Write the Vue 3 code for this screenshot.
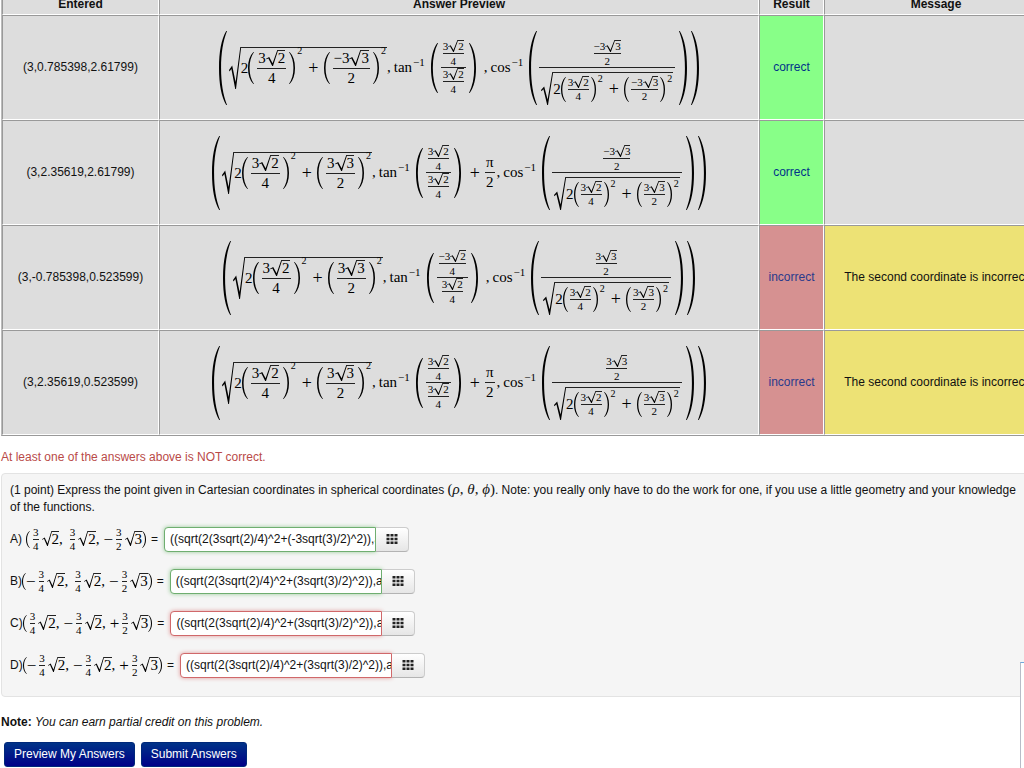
<script setup>
import { h } from 'vue'

// Small builders for typeset formulas
const box = (cls, ...kids) => h('span', { class: cls }, kids)
const num = (t) => box('num', t)
const fn = (t) => box('fn', t)
const op = (t) => box('op', t)
const neg = () => box('neg', '−')
const comma = () => box('comma', ',')
const paren = (side, size) =>
  h('svg', { class: ['paren', side, size], viewBox: '0 0 10 100', preserveAspectRatio: 'none', 'aria-hidden': 'true' }, [
    h('path', {
      d: side === 'left'
        ? 'M9 0C3 11 0 28 0 50S3 89 9 100H10C5 86 2.6 70 2.6 50S5 14 10 0Z'
        : 'M1 0C7 11 10 28 10 50S7 89 1 100H0C5 86 7.4 70 7.4 50S5 14 0 0Z'
    })
  ])
const group = (size, ...kids) => box('group g-' + size, paren('left', size), ...kids, paren('right', size))
const frac = (cls, top, bottom) => box('frac ' + cls, box('top', ...top), box('bar'), box('bottom', ...bottom))
const root = (cls, ...kids) =>
  box('root ' + cls,
    h('svg', { class: 'surd', viewBox: '0 0 12 42', preserveAspectRatio: 'none', 'aria-hidden': 'true' }, [
      h('path', { d: 'M0 23L3.2 18.5L6.6 35L11.3 0H12V1.5L7 42H6.2L2.4 22L.5 24.5Z' })
    ]),
    box('radicand', ...kids))
const sup = (...kids) => box('sup', ...kids)
const inv = () => box('inv', neg(), num('1'))
const radThree = (minus, n) => [...(minus ? [neg()] : []), num('3'), root('tiny', num(n))]

const norm = (size, minus) => [
  num('2'),
  box('power', group(size, frac(size, radThree(false, '2'), [num('4')])), sup(num('2'))),
  op('+'),
  box('power', group(size, frac(size, radThree(minus, '3'), [num('2')])), sup(num('2')))
]

const formula = ({ minusRho, minusTan, pi, minusCos, minusDen }) => () =>
  box('math',
    group('huge',
      root('large', ...norm('normal', minusRho)),
      comma(), fn('tan'), inv(),
      group('big',
        frac('outer',
          [frac('small', radThree(minusTan, '2'), [num('4')])],
          [frac('small', radThree(false, '2'), [num('4')])])),
      ...(pi ? [op('+'), frac('normal', [num('π')], [num('2')])] : [box('gap')]),
      comma(), fn('cos'), inv(),
      group('huge',
        frac('outer tall',
          [frac('small', radThree(minusCos, '3'), [num('2')])],
          [root('medium', ...norm('small', minusDen))]))))

const term = (sign, d, n) => [
  ...(sign ? [box('neg', sign)] : []),
  frac('small', [num('3')], [num(d)]),
  root('inline', num(n))
]
const point = (a, b, c) => () =>
  box('math inline-math', paren('left', 'line'),
    ...term(a, '4', '2'), comma(), ...term(b, '4', '2'), comma(), ...term(c, '2', '3'),
    paren('right', 'line'))

const results = [
  { entered: '(3,0.785398,2.61799)', preview: formula({ minusRho: true, minusCos: true, minusDen: true }), result: 'correct', message: '' },
  { entered: '(3,2.35619,2.61799)', preview: formula({ pi: true, minusCos: true }), result: 'correct', message: '' },
  { entered: '(3,-0.785398,0.523599)', preview: formula({ minusTan: true }), result: 'incorrect', message: 'The second coordinate is incorrect' },
  { entered: '(3,2.35619,0.523599)', preview: formula({ pi: true }), result: 'incorrect', message: 'The second coordinate is incorrect' }
]

const answers = [
  { id: 'a', label: 'A)', spaced: true, point: point('', '', '−'), ok: true, value: '((sqrt(2(3sqrt(2)/4)^2+(-3sqrt(3)/2)^2)),a' },
  { id: 'b', label: 'B)', point: point('−', '', '−'), ok: true, value: '((sqrt(2(3sqrt(2)/4)^2+(3sqrt(3)/2)^2)),a' },
  { id: 'c', label: 'C)', point: point('', '−', '+'), ok: false, value: '((sqrt(2(3sqrt(2)/4)^2+(3sqrt(3)/2)^2)),a' },
  { id: 'd', label: 'D)', point: point('−', '−', '+'), ok: false, value: '((sqrt(2(3sqrt(2)/4)^2+(3sqrt(3)/2)^2)),a' }
]
</script>

<template>
  <main class="page">
    <table class="results">
      <colgroup>
        <col class="c-entered"><col class="c-preview"><col class="c-result"><col class="c-message">
      </colgroup>
      <thead>
        <tr><th>Entered</th><th>Answer Preview</th><th>Result</th><th>Message</th></tr>
      </thead>
      <tbody>
        <tr v-for="r in results" :key="r.entered">
          <td>{{ r.entered }}</td>
          <td><component :is="r.preview" /></td>
          <td :class="r.result"><a href="#">{{ r.result }}</a></td>
          <td :class="{ note: r.message }">{{ r.message }}</td>
        </tr>
      </tbody>
    </table>

    <p class="warning">At least one of the answers above is NOT correct.</p>

    <section class="problem">
      <p class="intro">
        (1 point) Express the point given in Cartesian coordinates in spherical coordinates
        <span class="coords">(<i>ρ</i>, <i>θ</i>, <i>ϕ</i>)</span>. Note: you really only have to do the work for one, if you use a little geometry and your knowledge of the functions.
      </p>
      <div v-for="a in answers" :key="a.id" class="answer">
        <label :for="'ans-' + a.id" :class="{ spaced: a.spaced }">{{ a.label }}<component :is="a.point" /><span class="equals">=</span></label>
        <input :id="'ans-' + a.id" type="text" :value="a.value" :class="a.ok ? 'ok' : 'bad'">
        <button type="button" class="grid-button" aria-label="Equation editor">
          <svg viewBox="0 0 11 10" width="12" height="10" aria-hidden="true">
            <path d="M0 0h3v2.6H0zM4 0h3v2.6H4zM8 0h3v2.6H8zM0 3.7h3v2.6H0zM4 3.7h3v2.6H4zM8 3.7h3v2.6H8zM0 7.4h3V10H0zM4 7.4h3V10H4zM8 7.4h3V10H8z" />
          </svg>
        </button>
      </div>
    </section>

    <p class="credit"><b>Note:</b> <i>You can earn partial credit on this problem.</i></p>
    <div class="actions">
      <button type="button">Preview My Answers</button>
      <button type="button">Submit Answers</button>
    </div>
    <aside class="panel"></aside>
  </main>
</template>

<style>
body { background: #fff; overflow: hidden; }
</style>

<style scoped>
.page {
  position: relative;
  box-sizing: border-box;
  height: 100vh;
  overflow: hidden;
  display: flow-root;
  font: 12px/17px "Liberation Sans", Arial, sans-serif;
  color: #111;
}
p { margin: 0; }

.results {
  width: max-content;
  margin: -6px 0 0 1px;
  border: 1px solid #bbb;
  border-top: 0;
  border-bottom-color: #999;
  border-spacing: 0;
  background: #ddd;
  text-align: center;
}
.c-entered { width: 157px; }
.c-preview { width: 600px; }
.c-result { width: 65px; }
.c-message { width: 224px; }
th, td {
  box-sizing: border-box;
  padding: 0;
  border: 1px solid;
  border-color: #999 #fff #fff #999;
  white-space: nowrap;
}
th { height: 21px; line-height: 17px; }
td { height: 105px; }
td a { color: #038; text-decoration: none; }
.correct { background: #8f8; }
.incorrect { background: #d69191; }
.incorrect a { color: #2a3a8c; }
.note { background: #ede275; }

.warning { margin: 13px 0 0 1px; color: #b94a48; }
.problem {
  margin: 7px -24px 0 1px;
  padding: 7px 24px 10px 8px;
  border: 1px solid #e3e3e3;
  border-radius: 4px;
  background: #f5f5f5;
}
.intro { margin-bottom: 2px; }
.coords { font: 15px/16px "Liberation Serif", serif; }
.answer { display: flex; align-items: center; height: 42px; }
.answer label { display: flex; align-items: center; }
.spaced :deep(.inline-math) { margin-left: 4px; }
.equals { margin: 0 6px 0 5px; }
.answer input {
  box-sizing: border-box;
  width: 212px;
  height: 25px;
  padding: 0 0 0 5px;
  border: 1px solid;
  border-radius: 4px 0 0 4px;
  background: #fff;
  color: #111;
  font: inherit;
  outline: 0;
}
.answer .ok { border-color: #6fae70; box-shadow: 0 0 4px #9c9; }
.answer .bad { border-color: #d0686a; box-shadow: 0 0 4px #e09a9a; }
.grid-button {
  display: flex;
  align-items: center;
  justify-content: center;
  width: 33px;
  height: 25px;
  padding: 0;
  border: 1px solid #ccc;
  border-left: 0;
  border-bottom-color: #b3b3b3;
  border-radius: 0 4px 4px 0;
  background: linear-gradient(#fff, #e6e6e6);
}
.grid-button svg { fill: #222; }

.credit { margin: 17px 0 0 1px; }
.actions { display: flex; gap: 6px; margin: 11px 0 0 4px; }
.actions button {
  height: 25px;
  padding: 0 9px;
  border: 1px solid #00287a;
  border-radius: 3px;
  background: linear-gradient(#038, #008);
  color: #fff;
  font: inherit;
}
.panel {
  position: absolute;
  top: 662px;
  right: 0;
  bottom: 0;
  width: 3px;
  border-top: 1px solid #6fa8dc;
  border-left: 1px solid #b8bcc8;
  background: #fff;
}

:deep(.math) {
  display: inline-flex;
  align-items: center;
  font: 15px/1 "Liberation Serif", serif;
  color: #000;
  vertical-align: middle;
}
:deep(.math span) { display: inline-flex; align-items: center; flex: none; }
:deep(.math .op) { font-size: 18px; margin: 0 5px; }
:deep(.math .group + .op) { margin-left: 9px; }
:deep(.math .comma) { margin-right: 3px; }
:deep(.math .frac + .comma) { margin-left: 2px; }
:deep(.math .gap) { width: 8px; }
:deep(.math .inv) { font-size: 11px; padding-bottom: 10px; margin: 0 6px 0 1px; }
:deep(.math .paren) { flex: none; display: block; }
:deep(.math .paren.huge) { width: 8px; height: 74px; }
:deep(.math .paren.big) { width: 7px; height: 50px; }
:deep(.math .paren.normal) { width: 6px; height: 32px; }
:deep(.math .paren.small) { width: 5px; height: 25px; }
:deep(.math .paren.line) { width: 4px; height: 17px; }
:deep(.math .g-huge > .left) { margin-right: 2px; }
:deep(.math .g-huge > .right) { margin-left: 4px; }
:deep(.math .g-big) { gap: 3px; }
:deep(.math .g-normal) { gap: 3px; }
:deep(.math .g-small) { gap: 2px; }
:deep(.math .power) { align-items: flex-start; }
:deep(.math .sup) { font-size: 10px; margin: -4px 1px 0 2px; }
:deep(.math .g-small + .sup) { margin-top: -2px; }

:deep(.math .frac) { display: inline-grid; grid-template-rows: 1fr 1px 1fr; }
:deep(.math .bar) { height: 1px; background: #222; }
:deep(.math .top) { align-items: flex-end; justify-content: center; padding: 0 1px 2px; }
:deep(.math .bottom) { align-items: flex-start; justify-content: center; padding: 2px 1px 0; }
:deep(.math .frac.small) { font-size: 11px; }
:deep(.math .frac.small > .top) { padding: 0 0 1px; }
:deep(.math .frac.small > .bottom) { padding: 1px 0 0; }
:deep(.math .outer > .top), :deep(.math .outer > .bottom) { padding: 0 2px; }
:deep(.math .tall > .top) { height: 37px; }
:deep(.math .tall > .top > .frac) { align-self: flex-end; }

:deep(.math .root) { align-items: stretch; }
:deep(.math .surd) { flex: none; display: block; width: 12px; }
:deep(.math .radicand) { border-top: 1px solid #222; }
:deep(.math .large) { height: 42px; }
:deep(.math .medium) { height: 33px; margin-top: 4px; }
:deep(.math .tiny .surd) { width: 10px; height: 12px; }
:deep(.math .normal .tiny .surd) { width: 12px; height: 16px; }
:deep(.math .inline .surd) { width: 10px; height: 15px; }

:deep(.inline-math .comma) { margin-right: 4px; }
:deep(.inline-math .neg) { font-size: 17px; }
:deep(.inline-math .frac) { margin: 0 3px; }
</style>
